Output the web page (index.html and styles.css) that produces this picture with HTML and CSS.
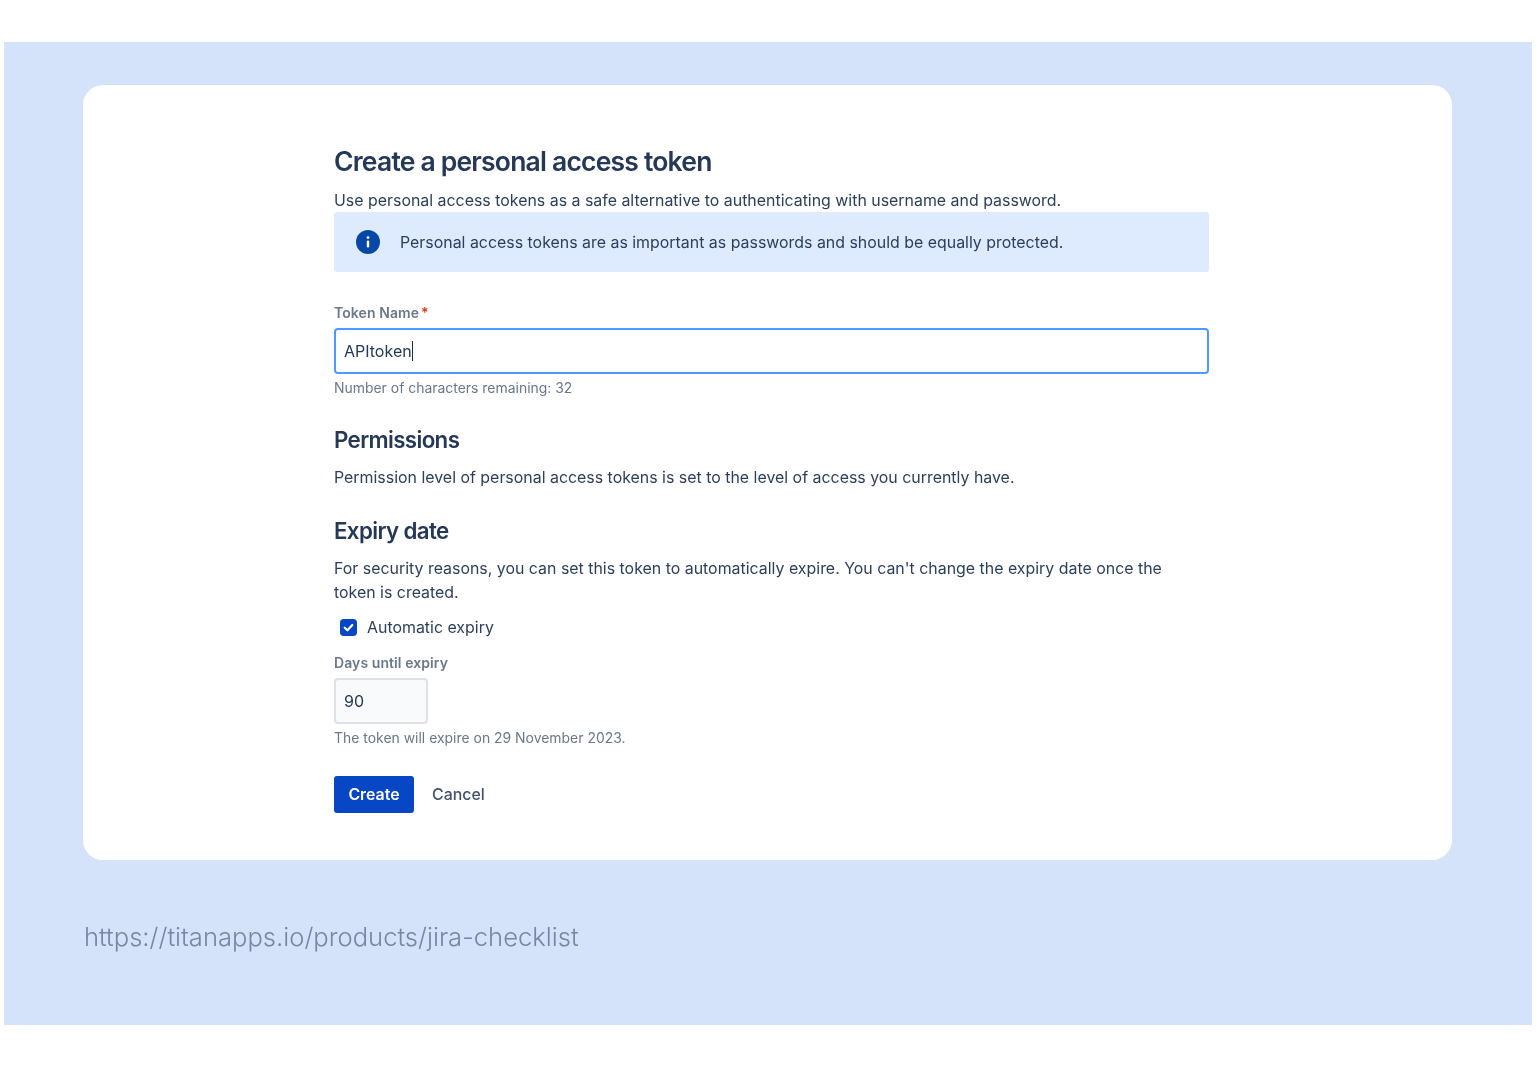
FILE: index.html
```html
<!DOCTYPE html>
<html lang="en">
<head>
<meta charset="utf-8">
<title>Create a personal access token</title>
<link rel="stylesheet" href="styles.css">
</head>
<body>
<main class="panel">
  <section class="card">
    <form class="form">
      <h1 class="title">Create a personal access token</h1>
      <p class="text intro">Use personal access tokens as a safe alternative to authenticating with username and password.</p>
      <div class="notice">
        <svg class="notice-icon" viewBox="0 0 24 24" aria-hidden="true">
          <circle cx="12" cy="12" r="12" fill="#0747a6"/>
          <circle cx="12" cy="7.6" r="1.4" fill="#fff"/>
          <rect x="10.8" y="10.6" width="2.4" height="7" rx="1" fill="#fff"/>
        </svg>
        <span class="notice-text">Personal access tokens are as important as passwords and should be equally protected.</span>
      </div>
      <div class="label token-label">Token Name<span class="req">*</span></div>
      <div class="input input-focus"><span>APItoken</span><span class="caret"></span></div>
      <div class="hint">Number of characters remaining: 32</div>
      <h2 class="heading permissions">Permissions</h2>
      <p class="text perm-text">Permission level of personal access tokens is set to the level of access you currently have.</p>
      <h2 class="heading expiry">Expiry date</h2>
      <p class="text expiry-text">For security reasons, you can set this token to automatically expire. You can't change the expiry date once the token is created.</p>
      <div class="check-row">
        <svg class="check" viewBox="0 0 16 16" aria-hidden="true">
          <rect width="16" height="16" rx="3.5" fill="#0747c6"/>
          <path d="M4.4 8.2 7 10.6l4.6-5" fill="none" stroke="#fff" stroke-width="2" stroke-linecap="round" stroke-linejoin="round"/>
        </svg>
        <span class="check-label">Automatic expiry</span>
      </div>
      <div class="label days-label">Days until expiry</div>
      <div class="input input-days">90</div>
      <div class="hint">The token will expire on 29 November 2023.</div>
      <div class="actions">
        <span class="btn">Create</span>
        <span class="cancel">Cancel</span>
      </div>
    </form>
  </section>
  <p class="url">https://titanapps.io/products/jira-checklist</p>
</main>
</body>
</html>
```

FILE: styles.css
```css
* { box-sizing: border-box; }
html, body { margin: 0; padding: 0; background: #fff; }
body { padding: 42px 4px; height: 1067px; font-family: Inter, "Liberation Sans", sans-serif; color: #253858; }
.panel { height: 983px; background: #d4e3f9; padding: 43px 80px 0 79px; }
.card { height: 775px; background: #fff; border-radius: 20px; padding: 59px 243px 0 251px; filter: blur(0.35px); }
.form { display: flex; flex-direction: column; align-items: stretch; }
.title { margin: 0; font-size: 26.5px; line-height: 34px; font-weight: 600; letter-spacing: -0.8px; color: #253858; }
.text { margin: 0; font-size: 15.92px; line-height: 24px; color: #2c3e5d; }
.intro { margin-top: 13px; height: 20px; line-height: 20px; }
.notice { margin-top: 1px; height: 60px; background: #deebff; border-radius: 3px; display: flex; align-items: center; padding-left: 22px; }
.notice-icon { width: 24px; height: 24px; flex: none; }
.notice-text { margin-left: 20px; font-size: 15.92px; color: #2c3e5d; }
.label { font-size: 14px; line-height: 18px; font-weight: 600; letter-spacing: 0.08px; color: #6b778c; }
.token-label { margin-top: 32px; }
.req { color: #de350b; margin-left: 2px; }
.input { display: flex; align-items: center; height: 46px; border-radius: 4px; font-size: 16px; color: #253858; padding-left: 8px; }
.input-focus { margin-top: 6px; border: 2px solid #4c9aff; background: #fff; }
.caret { width: 1px; height: 20px; background: #172b4d; }
.hint { margin-top: 5px; font-size: 13.95px; line-height: 18px; color: #6b778c; }
.heading { margin: 0; font-size: 22.3px; line-height: 28px; font-weight: 600; letter-spacing: -0.63px; color: #253858; }
.permissions { margin-top: 29px; }
.perm-text { margin-top: 12px; }
.expiry { margin-top: 27px; }
.expiry-text { margin-top: 12px; max-width: 850px; }
.check-row { display: flex; align-items: center; margin-top: 10px; padding-left: 6px; height: 24px; }
.check { width: 17px; height: 17px; flex: none; }
.check-label { margin-left: 10px; font-size: 15.92px; color: #2c3e5d; }
.days-label { margin-top: 15px; }
.input-days { margin-top: 6px; width: 94px; border: 2px solid #dfe1e6; background: #f9fafb; }
.actions { display: flex; align-items: center; margin-top: 29px; }
.btn { width: 80px; height: 37px; background: #0747c6; color: #fff; border-radius: 3px; display: flex; align-items: center; justify-content: center; font-size: 15.92px; font-weight: 600; }
.cancel { margin-left: 18px; font-size: 15.92px; font-weight: 500; color: #42526e; }
.url { margin: 60px 0 0 1px; font-family: Inter, sans-serif; font-weight: 300; font-size: 25.6px; line-height: 34px; color: #7a84a3; filter: blur(0.3px); }
```
